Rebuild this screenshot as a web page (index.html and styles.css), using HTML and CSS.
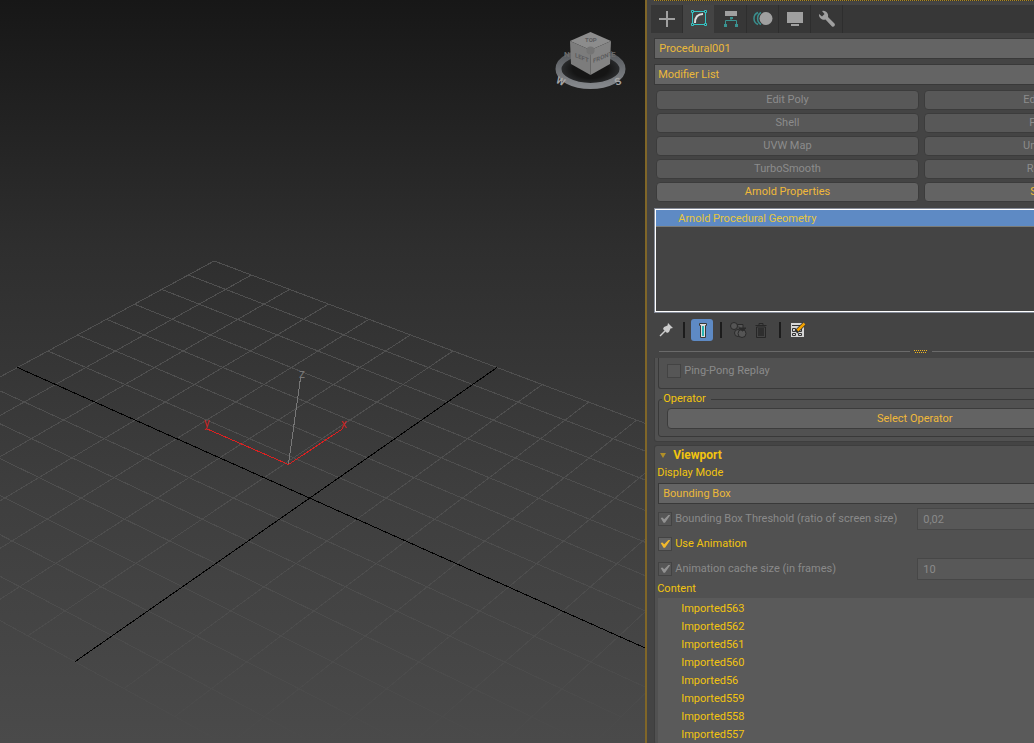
FILE: index.html
```html
<!DOCTYPE html>
<html lang="en">
<head>
<meta charset="utf-8">
<title>Procedural001 - Modify panel</title>
<link rel="stylesheet" href="styles.css">
</head>
<body>
<div class="app">
  <main class="viewport" aria-label="Perspective viewport">
    <svg class="scene">
      <defs>
        <linearGradient id="fade" gradientUnits="userSpaceOnUse" x1="0" y1="260" x2="0" y2="743">
          <stop offset="0" stop-color="#505050"/>
          <stop offset="0.5" stop-color="#4e4e4e"/>
          <stop offset="1" stop-color="#4a4a4a"/>
        </linearGradient>
        <linearGradient id="ring" x1="0" y1="0" x2="0" y2="1">
          <stop offset="0" stop-color="#53565a"/>
          <stop offset="1" stop-color="#85888c"/>
        </linearGradient>
        <radialGradient id="shade">
          <stop offset="0.55" stop-color="#151515"/>
          <stop offset="1" stop-color="#303234"/>
        </radialGradient>
      </defs>
      <path id="grid" class="grid" stroke="url(#fade)"/>
      <path id="axes" class="axes"/>
      <g class="gizmo">
        <path class="gizmo-z" d="M288.500 464L300.500 378"/>
        <path class="gizmo-xy" d="M206 428.500L288.500 464.500L343 428.500"/>
        <text class="red" x="204" y="427">y</text>
        <text class="red" x="341" y="428">x</text>
        <text class="grey" x="299" y="378">z</text>
      </g>
      <g class="viewcube">
        <ellipse cx="590.500" cy="69" rx="32" ry="17" fill="url(#shade)" stroke="url(#ring)" stroke-width="6"/>
        <g class="compass">
          <text x="556" y="85" transform="rotate(25 561 82)">W</text>
          <text x="615" y="85" transform="rotate(-25 618 82)">S</text>
        </g>
        <g class="compass far">
          <text x="564" y="57">N</text>
          <text x="611" y="57">E</text>
        </g>
        <path fill="#8c8c8c" d="M590.500 32L611 41L590.500 50L570 41Z"/>
        <path fill="#7c7c7c" d="M570 41L590.500 50V75L571 64Z"/>
        <path fill="#838383" d="M611 41L590.500 50V75L610 64Z"/>
        <circle cx="590.500" cy="50.500" r="4" fill="#747474"/>
        <g class="faces">
          <text x="585" y="42">TOP</text>
          <text transform="translate(575 57) skewY(22)">LEFT</text>
          <text transform="translate(593 63) skewY(-22)">FRONT</text>
        </g>
      </g>
    </svg>
  </main>

  <aside class="panel">
    <div class="content">
      <div class="dock-grip"></div>
      <nav class="tabs" aria-label="Command panel">
        <button class="tab" aria-label="Create"><svg width="32" height="27" viewBox="0 0 32 27"><path d="M8 13H24M16 5V21" stroke="#a0a0a0" stroke-width="2"/></svg></button>
        <button class="tab active" aria-label="Modify"><svg width="32" height="27" viewBox="0 0 32 27" fill="none"><path d="M8.500 5.500H23M8.500 18.500H23M9.500 5V19M22.500 5V19" stroke="#36c5c5"/><path d="M12 17C12 11 15 8 20 8" stroke="#ddd" stroke-width="2"/><g fill="#333" stroke="#36c5c5"><path d="M8.500 4.500h2v2h-2zM21.500 4.500h2v2h-2zM8.500 17.500h2v2h-2zM21.500 17.500h2v2h-2z"/></g></svg></button>
        <button class="tab" aria-label="Hierarchy"><svg width="32" height="27" viewBox="0 0 32 27"><path d="M10 5h12v5H10z" fill="#a0a0a0"/><path d="M16 11v3M10.500 18v-3.500h11V18" fill="none" stroke="#3a9391"/><path d="M9 18h3v3H9zM20 18h3v3h-3zM15 11h3v2h-3z" fill="#3a9391"/></svg></button>
        <button class="tab" aria-label="Motion"><svg width="32" height="27" viewBox="0 0 32 27"><path d="M11 6.500A6.500 6.500 0 0 0 11 18.500M14 6.500A7 7 0 0 0 14 18.500" fill="none" stroke="#3a8e8d" stroke-width="1.500"/><circle cx="19" cy="12.500" r="6.500" fill="#a0a0a0"/></svg></button>
        <button class="tab" aria-label="Display"><svg width="32" height="27" viewBox="0 0 32 27"><path d="M8 6h16v11H8zM12 18h8v2h-8z" fill="#a0a0a0"/></svg></button>
        <button class="tab" aria-label="Utilities"><svg width="32" height="27" viewBox="0 0 32 27"><path d="M11 5A5 5 0 0 1 17 11L23.500 17.500A2 2 0 0 1 21 20.500L14.500 13.500A5 5 0 0 1 8 8L11 10.500L13.500 8L11 5Z" fill="#a0a0a0"/></svg></button>
      </nav>

      <input class="field" type="text" value="Procedural001" aria-label="Object name">
      <select class="field modifiers" aria-label="Modifier list"><option>Modifier List</option></select>

      <div class="button-set">
        <button class="btn" disabled>Edit Poly</button><button class="btn" disabled>Edit Normals</button>
        <button class="btn" disabled>Shell</button><button class="btn" disabled>FFD 2x2x2</button>
        <button class="btn" disabled>UVW Map</button><button class="btn" disabled>Unwrap UVW</button>
        <button class="btn" disabled>TurboSmooth</button><button class="btn" disabled>Relax Mesh</button>
        <button class="btn">Arnold Properties</button><button class="btn">Symmetry</button>
      </div>

      <ul class="stack"><li class="stack-item">Arnold Procedural Geometry</li></ul>

      <div class="toolbar">
        <button class="tool" aria-label="Pin stack"><svg width="22" height="22" viewBox="0 0 22 22"><path d="M6 17L12 11" stroke="#ccc" stroke-width="1.500"/><path d="M14 4L19 9L16.500 9.500L15 13L13 14L9 10L10 8L13.500 6.500Z" fill="#ccc"/></svg></button>
        <span class="divider"></span>
        <button class="tool on" aria-label="Show end result"><svg width="22" height="22" viewBox="0 0 22 22"><path d="M8.500 4.500h7v2h-1v12h-5v-12h-1z" fill="#ddd" stroke="#383838"/><path d="M11 7h2v10h-2z" fill="#28b5b2"/></svg></button>
        <span class="divider"></span>
        <button class="tool wide" aria-label="Make unique" disabled><svg width="24" height="22" viewBox="0 0 24 22" fill="#555" stroke="#2a2a2a"><path d="M11 5.500h6v5"/><circle cx="8" cy="7" r="3.500"/><circle cx="12" cy="14" r="3.500"/><circle cx="16" cy="14.500" r="4"/><path d="M13 9h7l-3.500 3z" fill="#2a2a2a"/></svg></button>
        <button class="tool wide" aria-label="Remove modifier" disabled><svg width="24" height="22" viewBox="0 0 24 22" fill="none" stroke="#272727"><path d="M6.500 6.500h11M10 6V4.500h4V6M7.500 8v10.500h9V8z"/><path d="M10 9v8M12 9v8M14 9v8" stroke-width="1.500"/></svg></button>
        <span class="divider"></span>
        <button class="tool" aria-label="Configure modifier sets"><svg width="22" height="22" viewBox="0 0 22 22"><path d="M4 4h13v14H4z" fill="#d5d5d5"/><path d="M5 6.500h11" stroke="#333"/><path d="M5.500 9.500h3v3h-3zM11.500 9.500h3v3h-3zM5.500 14.500h3v2h-3zM11.500 14.500h3v2h-3z" fill="#d5d5d5" stroke="#333"/><path d="M9 13L17.500 4.500" stroke="#333" stroke-width="4"/><path d="M10.500 11.500L17.500 4.500" stroke="#f0a000" stroke-width="2.500"/></svg></button>
      </div>

      <div class="splitter"><svg width="14" height="3" viewBox="0 0 14 3" fill="#f0b41e"><path d="M0 0h1v1H0zM2 0h1v1H2zM4 0h1v1H4zM6 0h1v1H6zM8 0h1v1H8zM10 0h1v1h-1zM12 0h1v1h-1zM1 2h1v1H1zM3 2h1v1H3zM5 2h1v1H5zM7 2h1v1H7zM9 2h1v1H9zM11 2h1v1h-1z"/></svg></div>

      <section class="rollout first">
        <div class="group cut">
          <label class="check off"><input type="checkbox" disabled>Ping-Pong Replay</label>
        </div>
        <fieldset class="group operator">
          <legend>Operator</legend>
          <button class="btn tall">Select Operator</button>
        </fieldset>
      </section>

      <section class="rollout view">
        <h2 class="heading"><svg width="6" height="5" viewBox="0 0 6 5"><path d="M0 0h6L3 5z" fill="#b08f28"/></svg>Viewport</h2>
        <label class="caption" for="mode">Display Mode</label>
        <select class="field mode" id="mode"><option>Bounding Box</option></select>
        <div class="row">
          <label class="check off"><input type="checkbox" checked disabled>Bounding Box Threshold (ratio of screen size)</label>
          <input class="spin" type="text" value="0,02" aria-label="Bounding box threshold" disabled>
        </div>
        <div class="row">
          <label class="check"><input type="checkbox" checked>Use Animation</label>
        </div>
        <div class="row">
          <label class="check off"><input type="checkbox" checked disabled>Animation cache size (in frames)</label>
          <input class="spin" type="text" value="10" aria-label="Animation cache size" disabled>
        </div>
        <h3 class="caption">Content</h3>
        <ul class="items">
          <li>Imported563</li>
          <li>Imported562</li>
          <li>Imported561</li>
          <li>Imported560</li>
          <li>Imported56</li>
          <li>Imported559</li>
          <li>Imported558</li>
          <li>Imported557</li>
        </ul>
      </section>
    </div>
  </aside>
</div>
<script src="grid.js"></script>
</body>
</html>
```
FILE: styles.css
```css
* { box-sizing: border-box; }
body {
  margin: 0;
  background: #444;
  color: #f2c40f;
  font: 11px/18px Roboto, "Noto Sans", sans-serif;
}
button, input, select { font: inherit; color: inherit; margin: 0; }
ul, h2, h3 { margin: 0; padding: 0; list-style: none; font-size: inherit; }

.app {
  display: grid;
  grid-template-columns: 62.4% minmax(0, 1fr);
  height: 100vh;
  overflow: hidden;
}

.viewport {
  overflow: hidden;
  background: linear-gradient(#171717 0%, #2e2e2e 33%, #3e3e3e 66%, #4a4a4a 100%);
}
.scene { display: block; width: 100%; height: 100%; }
.grid, .axes, .gizmo path { fill: none; shape-rendering: crispEdges; }
.axes { stroke: #000; }
.gizmo { font-size: 12px; }
.gizmo-z { stroke: #777; }
.gizmo-xy { stroke: #dc2020; }
.red { fill: #c82424; }
.grey { fill: #777; }
.compass { font-size: 10px; font-weight: bold; fill: #a5a5a5; }
.far { font-size: 8px; fill: #6c6c6c; }
.faces { font-size: 6px; font-weight: bold; fill: #5b5b5d; }

.panel {
  overflow: hidden;
  border-left: 2px solid #806628;
  background: #444;
}
.content {
  display: flex;
  flex-direction: column;
  min-width: 539px;
  padding-left: 7px;
}
.dock-grip {
  height: 1px;
  background: repeating-linear-gradient(90deg, #a88628 0 1px, #3c3520 1px 2px);
}

.tabs {
  display: flex;
  height: 28px;
  margin: 4px 0 5px -3px;
  background: #373737;
}
.tab {
  width: 32px;
  padding: 0;
  border: 0;
  border-right: 1px solid #2e2e2e;
  background: none;
}
.tab.active { background: #444; border-color: #373737; }
.tab svg, .tool svg { display: block; }

.field {
  appearance: none;
  width: 100%;
  height: 21px;
  padding: 0 4px;
  border: 1px solid #393939;
  border-radius: 0;
  background: #646464;
  color: #ebb93a;
}
.modifiers { margin-top: 5px; padding: 0 3px; }

.button-set {
  display: grid;
  grid-template-columns: 1fr 1fr;
  gap: 3px 5px;
  margin: 5px 0 6px 2px;
}
.btn {
  height: 20px;
  padding: 0;
  border: 1px solid #3c3c3c;
  border-radius: 4px;
  background: #636363;
  color: #f0b93a;
}
.btn:disabled { background: #585858; color: #8c8c8c; }

.stack {
  height: 105px;
  border: 1px solid #858b98;
  outline: 1px solid #fff;
  outline-offset: -2px;
  padding: 1px;
}
.stack-item {
  height: 17px;
  padding-left: 22px;
  border-bottom: 1px solid #7b7c78;
  background: #5e8ac4;
  color: #e6c63c;
}

.toolbar {
  display: flex;
  align-items: center;
  height: 22px;
  margin: 6px 0 9px;
}
.tool {
  width: 22px;
  height: 22px;
  padding: 0;
  border: 0;
  border-radius: 3px;
  background: none;
}
.tool.on { background: #5e8ac4; }
.tool.wide { width: 23px; }
.divider { width: 2px; height: 16px; margin: 0 6px 0 7px; background: #1c1c1c; }
.divider + .wide { margin-left: -2px; }

.splitter {
  display: flex;
  align-items: center;
  gap: 4px;
  height: 3px;
  margin: 0 4px 5px 5px;
}
.splitter::before, .splitter::after { content: ""; flex: 1; height: 1px; background: #6a6a6a; }

.rollout {
  margin-right: 10px;
  border: 1px solid #3e3e3e;
  border-radius: 3px;
  background: #515151;
  padding: 0 4px 0 3px;
}
.first { border-top: 0; border-radius: 0 0 3px 3px; padding-bottom: 4px; }
.group {
  margin: 0;
  border: 1px solid #393939;
  border-radius: 3px;
  padding: 0 8px;
}
.cut { height: 31px; border-top: 0; border-radius: 0 0 3px 3px; padding-top: 4px; }
.operator { min-width: 0; margin-top: 1px; padding: 0 8px 7px; }
.operator legend { height: 18px; margin-left: -5px; padding: 0 5px 0 1px; }
.tall { display: block; width: 100%; height: 21px; }

.check { display: flex; align-items: center; gap: 3px; height: 18px; }
.check.off { color: #8a8a8a; }
.check input {
  appearance: none;
  display: grid;
  place-items: center;
  width: 14px;
  height: 14px;
  border: 1px solid #434343;
  background: #636363;
}
.check.off input { background: #565656; }
.check input:checked::before {
  content: "";
  width: 10px;
  height: 9px;
  background: #f2b92c;
  clip-path: polygon(5% 40%, 22% 32%, 40% 52%, 85% 3%, 100% 8%, 48% 92%, 33% 92%);
}
.check.off input:checked::before { background: #929292; }

.view { margin-top: 3px; padding-right: 0; border-bottom: 0; }
.heading { display: flex; align-items: center; gap: 7px; height: 18px; padding-left: 2px; font-size: 12px; }
.caption { display: block; height: 18px; margin-left: -1px; font-weight: normal; }
.mode { display: block; margin: 1px 0 4px; }
.row { display: grid; grid-template-columns: 259px 1fr; align-items: center; height: 22px; margin-bottom: 3px; }
.spin {
  min-width: 0;
  height: 22px;
  padding: 0 5px;
  border: 1px solid #474747;
  background: #585858;
  color: #8a8a8a;
}
.row + .caption { margin-top: -3px; }
.items { padding: 2px 0 0 23px; background: #5a5a5a; }
```
FILE: grid.js
```javascript
// Projects the 14 x 14 home grid on to the viewport.
function project(s, t) {
  const w = 1 - 0.01324 * s - 0.0131 * t;
  const x = (33.82 * s - 28.33 * t + 214.2) / w;
  const y = (10.35 * s + 10.4 * t + 261) / w;
  return x.toFixed(1) + " " + y.toFixed(1);
}

let grid = "";
let axes = "";
for (let i = 0; i <= 14; i++) {
  const lines = "M" + project(i, 0) + "L" + project(i, 14) +
                "M" + project(0, i) + "L" + project(14, i);
  if (i === 7) axes += lines;
  else grid += lines;
}
document.getElementById("grid").setAttribute("d", grid);
document.getElementById("axes").setAttribute("d", axes);
```
